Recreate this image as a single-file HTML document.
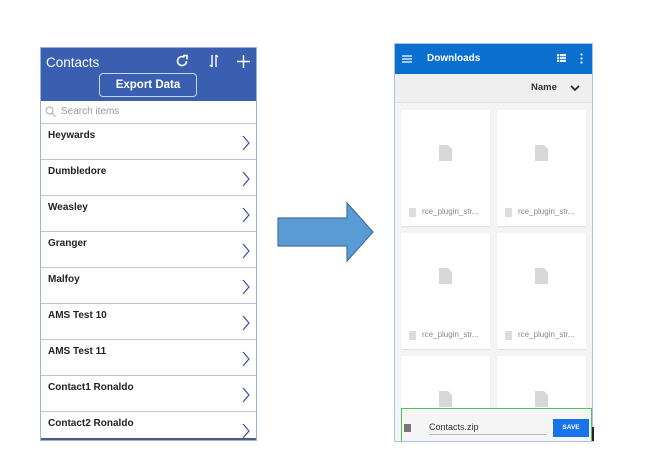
<!DOCTYPE html><html><head><style>
*{margin:0;padding:0;box-sizing:border-box}
body{width:660px;height:470px;background:#fff;position:relative;overflow:hidden;font-family:"Liberation Sans",sans-serif}
.a{position:absolute}
.lp{left:40px;top:47px;width:217px;height:394px;border:1px solid #9db3dd;background:#fff;overflow:hidden}
.row{position:absolute;left:0;width:215px;height:36px;border-top:1px solid #b6c3dc}
.row b{position:absolute;left:7px;top:6px;font-size:10px;color:#222}
.row svg{position:absolute;right:6px;top:11px}
.rp{left:394px;top:43px;width:199px;height:399px;border:1px solid #a8c4e8;background:#f4f4f4;overflow:hidden}
.card{position:absolute;width:89px;height:116px;background:#fff;box-shadow:0 1px 1px #ddd}
.card .ic{position:absolute;left:38px;top:35px}
.card .n{position:absolute;left:8px;top:97px;font-size:8px;color:#888;white-space:nowrap}
.card .n i{display:inline-block;width:7px;height:9px;background:#ddd;margin-right:6px;vertical-align:-3px}
</style></head><body>
<div class="a lp">
 <div class="a" style="left:0;top:0;width:217px;height:53px;background:#3b5fb0"></div>
 <div class="a" style="left:5px;top:7px;color:#fff;font-size:13.5px">Contacts</div>
 <svg class="a" style="left:134px;top:6px" width="14" height="14" viewBox="0 0 14 14"><path d="M11.5 7A4.5 4.5 0 1 1 9.5 3.3" fill="none" stroke="#fff" stroke-width="1.6"/><path d="M8 1.5h4v4" fill="none" stroke="#fff" stroke-width="1.6"/></svg>
 <svg class="a" style="left:167px;top:6px" width="12" height="14" viewBox="0 0 12 14"><path d="M4 1v12M8 1v12M4 13l-2-2M8 1l2 2" stroke="#fff" stroke-width="1.4" fill="none"/></svg>
 <svg class="a" style="left:196px;top:7px" width="13" height="13" viewBox="0 0 13 13"><path d="M6.5 0v13M0 6.5h13" stroke="#fff" stroke-width="1.4"/></svg>
 <div class="a" style="left:58px;top:25px;width:98px;height:24px;border:1px solid #c9d4ee;border-radius:4px;color:#fff;font-size:11.5px;font-weight:bold;text-align:center;line-height:22px">Export Data</div>
 <svg class="a" style="left:4px;top:58px" width="11" height="11" viewBox="0 0 11 11"><circle cx="4.5" cy="4.5" r="3.5" fill="none" stroke="#aaa"/><path d="M7 7l3.5 3.5" stroke="#aaa"/></svg>
 <div class="a" style="left:20px;top:58px;font-size:10px;color:#999">Search items</div>
 <div class="row" style="top:75px"><b>Heywards</b><svg width="8" height="16"><path d="M1 1l6 7-6 7" fill="none" stroke="#3c4fa0" stroke-width="1.2"/></svg></div>
 <div class="row" style="top:111px"><b>Dumbledore</b><svg width="8" height="16"><path d="M1 1l6 7-6 7" fill="none" stroke="#3c4fa0" stroke-width="1.2"/></svg></div>
 <div class="row" style="top:147px"><b>Weasley</b><svg width="8" height="16"><path d="M1 1l6 7-6 7" fill="none" stroke="#3c4fa0" stroke-width="1.2"/></svg></div>
 <div class="row" style="top:183px"><b>Granger</b><svg width="8" height="16"><path d="M1 1l6 7-6 7" fill="none" stroke="#3c4fa0" stroke-width="1.2"/></svg></div>
 <div class="row" style="top:219px"><b>Malfoy</b><svg width="8" height="16"><path d="M1 1l6 7-6 7" fill="none" stroke="#3c4fa0" stroke-width="1.2"/></svg></div>
 <div class="row" style="top:255px"><b>AMS Test 10</b><svg width="8" height="16"><path d="M1 1l6 7-6 7" fill="none" stroke="#3c4fa0" stroke-width="1.2"/></svg></div>
 <div class="row" style="top:291px"><b>AMS Test 11</b><svg width="8" height="16"><path d="M1 1l6 7-6 7" fill="none" stroke="#3c4fa0" stroke-width="1.2"/></svg></div>
 <div class="row" style="top:327px"><b>Contact1 Ronaldo</b><svg width="8" height="16"><path d="M1 1l6 7-6 7" fill="none" stroke="#3c4fa0" stroke-width="1.2"/></svg></div>
 <div class="row" style="top:363px"><b>Contact2 Ronaldo</b><svg width="8" height="16"><path d="M1 1l6 7-6 7" fill="none" stroke="#3c4fa0" stroke-width="1.2"/></svg></div>
 <div class="a" style="left:0;bottom:0;width:217px;height:2px;background:#4a5d8a"></div>
</div>
<svg class="a" style="left:276px;top:201px" width="100" height="62"><path d="M2 17H71V2L97 31 71 60V45H2Z" fill="#5b9bd5" stroke="#41719c" stroke-width="1.2"/></svg>
<div class="a rp">
 <div class="a" style="left:0;top:0;width:199px;height:30px;background:#0b6fd0"></div>
 <svg class="a" style="left:7px;top:11px" width="10" height="8"><path d="M0 1h10M0 4h10M0 7h10" stroke="#fff" stroke-width="1.3"/></svg>
 <div class="a" style="left:32px;top:9px;color:#fff;font-size:10px;font-weight:bold">Downloads</div>
 <svg class="a" style="left:162px;top:10px" width="9" height="8"><rect width="9" height="8" fill="#fff"/><path d="M0 2.7h9M0 5.3h9M2.5 0v8" stroke="#0b6fd0" stroke-width=".8"/></svg>
 <svg class="a" style="left:185px;top:9px" width="3" height="11"><circle cx="1.5" cy="1.5" r="1.1" fill="#fff"/><circle cx="1.5" cy="5.5" r="1.1" fill="#fff"/><circle cx="1.5" cy="9.5" r="1.1" fill="#fff"/></svg>
 <div class="a" style="left:0;top:30px;width:199px;height:29px;background:#efefef;border-bottom:1px solid #e2e2e2"></div>
 <div class="a" style="left:136px;top:38px;font-size:9.5px;font-weight:bold;color:#333">Name</div>
 <svg class="a" style="left:175px;top:41px" width="10" height="7"><path d="M1 1l4 4 4-4" fill="none" stroke="#222" stroke-width="1.6"/></svg>
 <div class="card" style="left:6px;top:66px"><svg class="ic" width="13" height="16"><path d="M0 0h9l4 4v12H0z" fill="#d8d8d8"/></svg><div class="n"><i></i>rce_plugin_str...</div></div>
 <div class="card" style="left:102px;top:66px"><svg class="ic" width="13" height="16"><path d="M0 0h9l4 4v12H0z" fill="#d8d8d8"/></svg><div class="n"><i></i>rce_plugin_str...</div></div>
 <div class="card" style="left:6px;top:189px"><svg class="ic" width="13" height="16"><path d="M0 0h9l4 4v12H0z" fill="#d8d8d8"/></svg><div class="n"><i></i>rce_plugin_str...</div></div>
 <div class="card" style="left:102px;top:189px"><svg class="ic" width="13" height="16"><path d="M0 0h9l4 4v12H0z" fill="#d8d8d8"/></svg><div class="n"><i></i>rce_plugin_str...</div></div>
 <div class="card" style="left:6px;top:312px"><svg class="ic" width="13" height="16"><path d="M0 0h9l4 4v12H0z" fill="#d8d8d8"/></svg></div>
 <div class="card" style="left:102px;top:312px"><svg class="ic" width="13" height="16"><path d="M0 0h9l4 4v12H0z" fill="#d8d8d8"/></svg></div>
 <div class="a" style="left:6px;top:364px;width:191px;height:34px;background:#f5f5f5;border:1px solid #4ec45a"></div>
 <div class="a" style="left:9px;top:380px;width:7px;height:8px;background:#777"></div>
 <div class="a" style="left:34px;top:378px;font-size:9px;color:#333">Contacts.zip</div>
 <div class="a" style="left:34px;top:390px;width:118px;height:1px;background:#bbb"></div>
 <div class="a" style="left:158px;top:375px;width:36px;height:18px;background:#1a73e8;color:#fff;font-size:6.5px;font-weight:bold;text-align:center;line-height:18px">SAVE</div>
</div>
<div class="a" style="left:592px;top:427px;width:2px;height:14px;background:#222"></div>
</body></html>
